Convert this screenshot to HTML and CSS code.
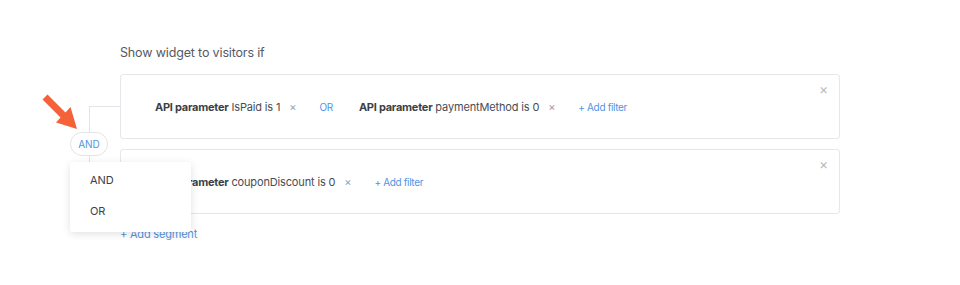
FILE: index.html
```html
<!DOCTYPE html>
<html>
<head>
<meta charset="utf-8">
<link rel="stylesheet" href="styles.css">
</head>
<body>
<div class="page">
  <div class="title">Show widget to visitors if</div>
  <div class="segments">
    <div class="logic">
      <div class="line-h"></div>
      <div class="line-v"></div>
      <div class="line-v2"></div>
      <div class="pill">AND</div>
      <svg class="arrow" width="40" height="40" viewBox="40 92 40 40">
        <path d="M42.5 99.5 L47.5 94.5 L65.5 112.5 L70.5 107 L77 129 L56 122.5 L60.5 117.5 Z" fill="#f4623a"/>
      </svg>
      <div class="menu">
        <div class="menu-item">AND</div>
        <div class="menu-item">OR</div>
      </div>
    </div>
    <div class="segment">
      <div class="filter"><b>API parameter</b> IsPaid is 1</div>
      <span class="x">×</span>
      <span class="op">OR</span>
      <div class="filter"><b>API parameter</b> paymentMethod is 0</div>
      <span class="x">×</span>
      <span class="add">+ Add filter</span>
      <span class="close">×</span>
    </div>
    <div class="segment">
      <div class="filter"><b>API parameter</b> couponDiscount is 0</div>
      <span class="x">×</span>
      <span class="add">+ Add filter</span>
      <span class="close">×</span>
    </div>
  </div>
  <div class="add-seg">+ Add segment</div>
</div>
</body>
</html>
```
FILE: styles.css
```css
html, body { margin: 0; padding: 0; background: #fff; }
body { font-family: Inter, "Noto Sans", sans-serif; color: #3d4149; }
.page { padding: 44px 0 0 120px; width: 720px; }
.title { font-size: 12.5px; letter-spacing: -0.15px; color: #555a63; line-height: 18px; margin-bottom: 12px; }
.segments { position: relative; display: flex; flex-direction: column; gap: 10px; }
.segment {
  position: relative; box-sizing: border-box;
  height: 65px; border: 1px solid #e6e7ea; border-radius: 3px;
  display: flex; align-items: center; padding-left: 34px; font-size: 11px; letter-spacing: -0.15px;
}
.filter { color: #484c55; }
.filter b { font-weight: 700; color: #3b3f47; letter-spacing: -0.25px; }
.x { color: #9a9ea6; font-size: 11px; margin-left: 9px; }
.op { color: #5094e4; font-size: 10px; letter-spacing: -0.3px; margin-left: 23px; margin-right: 26px; }
.add { color: #5094e4; font-size: 10px; letter-spacing: -0.35px; margin-left: 23px; }
.close { position: absolute; right: 11px; top: 5px; color: #b7bac0; font-size: 14px; }
.logic { position: absolute; left: -50px; top: 0; width: 50px; height: 100%; }
.line-h { position: absolute; left: 19px; top: 32px; width: 31px; height: 1px; background: #e3e4e7; }
.line-v { position: absolute; left: 19px; top: 32px; width: 1px; height: 26px; background: #e3e4e7; }
.line-v2 { position: absolute; left: 19px; top: 82px; width: 1px; height: 26px; background: #e3e4e7; }
.pill {
  position: absolute; left: 0; top: 58px; width: 36px; height: 22px;
  border: 1px solid #e3e4e7; border-radius: 12px; background: #fff;
  color: #5094e4; font-size: 10px; display: flex; align-items: center; justify-content: center;
}
.arrow { position: absolute; left: -30px; top: 18px; }
.menu {
  position: absolute; left: 0; top: 88px; width: 121px; height: 70px;
  background: #fff; border-radius: 3px;
  box-shadow: 0 2px 8px rgba(0,0,0,0.12);
  z-index: 2; font-size: 11px; letter-spacing: -0.1px; color: #3d4149;
}
.menu-item { padding-left: 20px; line-height: 31px; }
.menu-item:first-child { margin-top: 3px; }
.add-seg { color: #5094e4; font-size: 11px; letter-spacing: -0.2px; margin-top: 13px; }
```
